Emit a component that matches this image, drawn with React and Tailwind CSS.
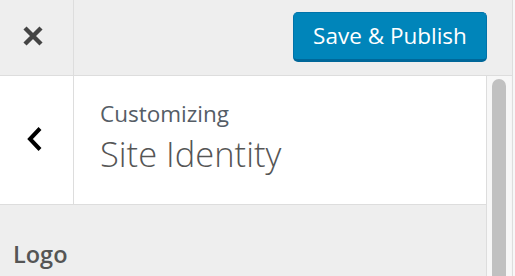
const font = { fontFamily: '"Open Sans", "Noto Sans", sans-serif' };

export default function App() {
  return (
    <div className="flex h-[276px] w-[515px] overflow-hidden bg-[#f5f5f5]" style={font}>
      <div className="flex w-[512px] flex-col">
        {/* top bar */}
        <div className="flex h-[76px] shrink-0 border-b border-[#dddddd] bg-[#eeeeee]">
          <button
            type="button"
            className="flex w-[74px] items-center justify-center border-r border-[#dddddd] pr-[7px] pb-[3px]"
          >
            <svg width="22" height="22" viewBox="0 0 22 22">
              <path
                d="M3 3 L19 19 M19 3 L3 19"
                stroke="#444444"
                strokeWidth="4.4"
                strokeLinecap="butt"
              />
            </svg>
          </button>
          <div className="flex flex-1 items-start justify-end pt-[12px] pr-[25px]">
            <button
              type="button"
              className="h-[50px] w-[194px] rounded-[5px] border border-[#0073aa] border-b-[3px] border-b-[#006799] bg-[#0085ba] text-[22.5px] leading-none text-white"
            >
              Save &amp; Publish
            </button>
          </div>
        </div>

        {/* body */}
        <div className="flex flex-1">
          <div className="flex w-[487px] flex-col border-r border-[#dddddd]">
            <div className="flex h-[129px] shrink-0 border-b border-[#dddddd] bg-white">
              <button
                type="button"
                className="flex w-[74px] items-center justify-center border-r border-[#dddddd] pr-[4px] pb-[2px]"
              >
                <svg width="18" height="26" viewBox="0 0 18 26">
                  <path
                    d="M14 2.5 L4 13 L14 23.5"
                    fill="none"
                    stroke="#000000"
                    strokeWidth="4"
                  />
                </svg>
              </button>
              <div className="flex flex-col pl-[26px] pt-[24px]">
                <span className="text-[22.5px] leading-[28px] text-[#555d66]">Customizing</span>
                <span className="mt-[4px] text-[34.5px] font-light leading-[44px] text-[#555555]">
                  Site Identity
                </span>
              </div>
            </div>
            <div className="flex-1 bg-[#eeeeee] px-[13px] pt-[32px]">
              <span className="text-[23.5px] font-semibold text-[#555555]">Logo</span>
            </div>
          </div>
          {/* scrollbar */}
          <div className="flex w-[24px] justify-center bg-[#f7f7f7] pt-[3px]">
            <div className="h-[300px] w-[14px] rounded-t-full bg-[#c1c1c1]" />
          </div>
        </div>
      </div>
      <div className="flex-1 border-l border-[#dddddd] bg-[#f7f7f7]" />
    </div>
  );
}
